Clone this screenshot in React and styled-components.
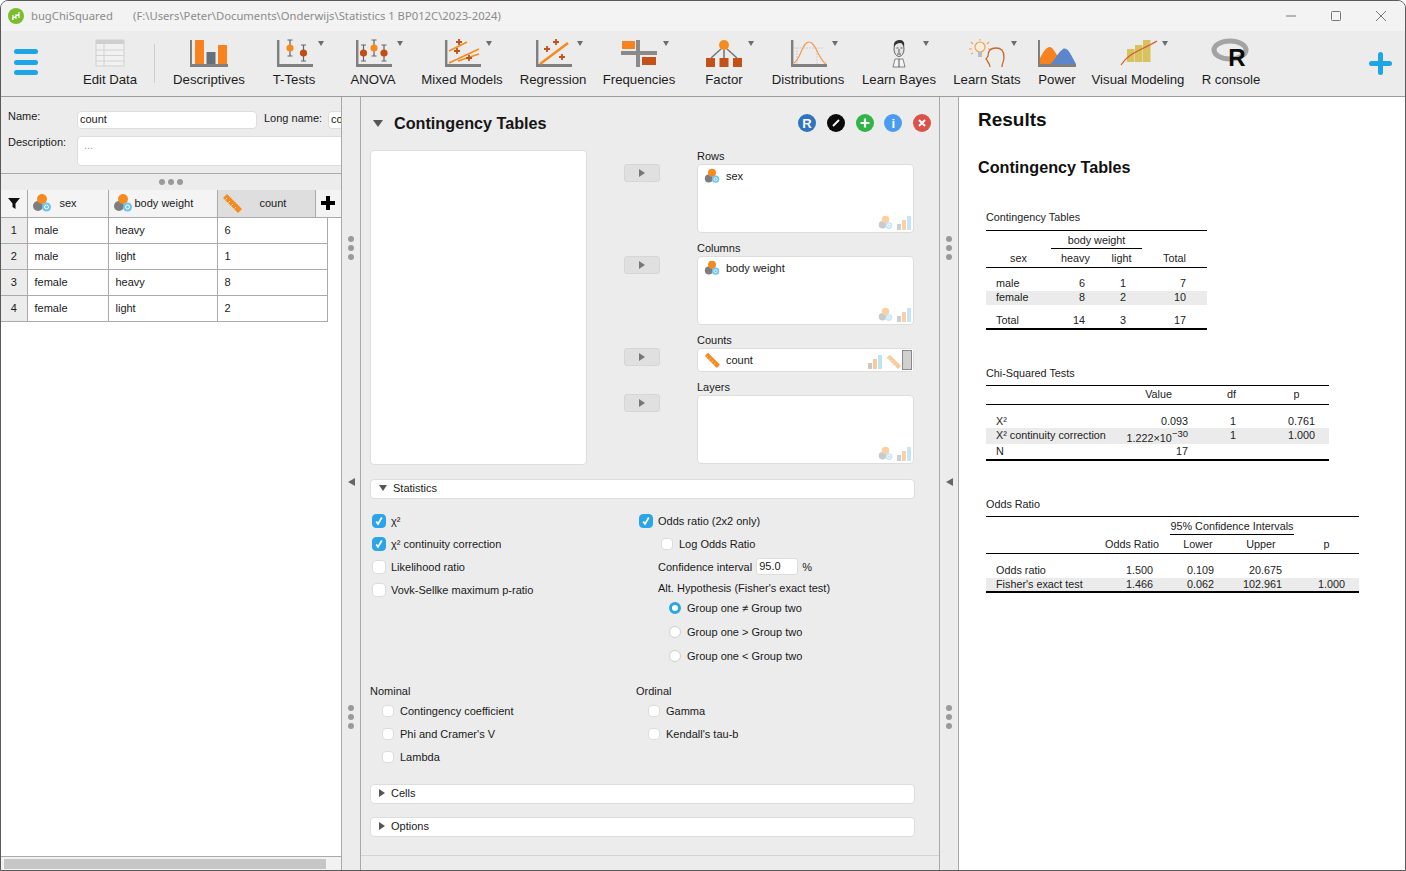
import React from 'react';
import styled, { createGlobalStyle } from 'styled-components';

const Global = createGlobalStyle`
  html, body { margin: 0; padding: 0; background: #fff; }
  body { font-family: "Liberation Sans", Arial, sans-serif; color: #1a1a1a; overflow: hidden; }
  * { box-sizing: border-box; }
`;

const Window = styled.div`
  width: 1406px;
  height: 871px;
  border: 1px solid #5a5a5a;
  border-radius: 8px 8px 0 0;
  overflow: hidden;
  display: flex;
  flex-direction: column;
  background: #ececec;
`;

/* title bar */
const TitleBar = styled.div`
  height: 30px;
  flex: none;
  background: #f3f3f3;
  display: flex;
  align-items: center;
  padding: 0 0 1px 7px;
  font-family: "Noto Sans", sans-serif;
  font-size: 11.25px;
  color: #8b8b8b;
`;
const AppName = styled.span`
  margin-left: 7px;
  width: 102px;
`;
const WinButtons = styled.div`
  margin-left: auto;
  padding-right: 2px;
  display: flex;
`;
const WinButton = styled.div`
  width: 45px;
  height: 29px;
  display: flex;
  align-items: center;
  justify-content: center;
`;

/* toolbar */
const Toolbar = styled.div`
  height: 66px;
  flex: none;
  background: #ececec;
  border-bottom: 1px solid #9c9c9c;
  display: flex;
`;
const Hamburger = styled.div`
  width: 69px;
  padding: 18px 0 0 13px;
  display: flex;
  flex-direction: column;
  gap: 5.5px;
  span {
    display: block;
    width: 24px;
    height: 5px;
    border-radius: 3px;
    background: #1ea5e8;
  }
`;
const ToolItem = styled.div`
  position: relative;
  width: ${(p) => p.$w}px;
  flex: none;
  display: flex;
  flex-direction: column;
  align-items: center;
  padding-top: 8px;
  color: #1c1c1c;
  font-size: 13.2px;
  line-height: 16px;
  white-space: nowrap;
  svg { display: block; margin-bottom: 3px; overflow: visible; }
`;
const DropArrow = styled.i`
  position: absolute;
  top: 10px;
  left: calc(50% + 24px);
  width: 0;
  height: 0;
  border-left: 3.5px solid transparent;
  border-right: 3.5px solid transparent;
  border-top: 5px solid #666e75;
`;
const ToolSep = styled.div`
  width: 1px;
  height: 39px;
  margin: 13px 5px 0 4px;
  background: #cfcfcf;
  flex: none;
`;
const PlusButton = styled.div`
  position: relative;
  margin-left: auto;
  margin-right: 13px;
  margin-top: 21px;
  width: 23px;
  height: 23px;
  &::before, &::after {
    content: '';
    position: absolute;
    background: #1ea5e8;
    border-radius: 3px;
  }
  &::before { left: 0; right: 0; top: 9px; height: 5px; }
  &::after { top: 0; bottom: 0; left: 9px; width: 5px; }
`;

/* panels */
const Main = styled.div`
  flex: 1;
  display: flex;
  min-height: 0;
`;
const DataPanel = styled.div`
  width: 340px;
  flex: none;
  display: flex;
  flex-direction: column;
  background: #fff;
  overflow: hidden;
`;
const VarEditor = styled.div`
  height: 77px;
  flex: none;
  background: #ececec;
  border-bottom: 1px solid #aaa;
  font-size: 11px;
  padding: 13px 0 0 7px;
`;
const EditorRow = styled.div`
  display: flex;
  height: 26px;
  white-space: nowrap;
`;
const EditorLabel = styled.div`
  width: 69px;
  flex: none;
`;
const LongLabel = styled.div`
  width: 64px;
  margin: 2px 0 0 7px;
  flex: none;
`;
const TextField = styled.div`
  width: ${(p) => p.$w}px;
  height: ${(p) => p.$h}px;
  flex: none;
  background: #fff;
  border: 1px solid #ddd;
  border-radius: 4px;
  padding: ${(p) => p.$pad || '1px 2px'};
  color: ${(p) => (p.$muted ? '#999' : '#1a1a1a')};
  overflow: hidden;
  margin-top: ${(p) => p.$mt ?? 1}px;
`;
const Grip = styled.div`
  height: 16px;
  flex: none;
  background: #ececec;
  display: flex;
  justify-content: center;
  align-items: center;
  gap: 3px;
  padding-right: 1px;
`;
const Dot = styled.i`
  width: 6px;
  height: 6px;
  border-radius: 50%;
  background: #9a9a9a;
  display: block;
`;
const DataTable = styled.table`
  border-collapse: collapse;
  table-layout: fixed;
  width: 340px;
  font-size: 11px;
`;
const HeadCell = styled.th`
  height: 27px;
  padding: 0;
  font-weight: normal;
  background: ${(p) => (p.$active ? '#dedede' : '#f4f4f4')};
  border-right: 1px solid #aaa;
  border-bottom: 1px solid #aaa;
  &:last-child { background: #f4f4f4; border-right: 0; }
  > svg { display: block; margin: auto; }
`;
const HeadInner = styled.div`
  display: flex;
  align-items: center;
  padding-left: ${(p) => p.$pl}px;
  span { margin-left: ${(p) => p.$gap}px; }
`;
const RowNum = styled.td`
  height: 26px;
  text-align: center;
  background: #ececec;
  border-right: 1px solid #aaa;
  border-bottom: 1px solid #aaa;
  padding: 0 0 1px;
`;
const DataCell = styled.td`
  padding: 0 0 1px 7px;
  border-right: 1px solid #aaa;
  border-bottom: 1px solid #aaa;
`;
const DataFill = styled.div`
  flex: 1;
  background: #fff;
`;
const ScrollBar = styled.div`
  height: 14px;
  flex: none;
  background: #f2f2f2;
  border-top: 1px solid #aaa;
  padding: 2px 0 0 3px;
  div {
    width: 322px;
    height: 10px;
    background: #c6c6c6;
  }
`;

const Splitter = styled.div`
  width: ${(p) => p.$w}px;
  flex: none;
  background: #ececec;
  border-left: 1px solid #a8a8a8;
  border-right: 1px solid #a8a8a8;
  display: flex;
  flex-direction: column;
  align-items: center;
  padding-top: 139px;
`;
const GripV = styled.div`
  display: flex;
  flex-direction: column;
  gap: 3px;
`;
const SplitArrow = styled.i`
  margin: 218px 0 219px;
  width: 0;
  height: 0;
  border-top: 4px solid transparent;
  border-bottom: 4px solid transparent;
  border-right: 7px solid #666;
`;

/* analysis form */
const Analysis = styled.div`
  width: 578px;
  flex: none;
  background: #ececec;
  font-size: 11px;
  display: flex;
  flex-direction: column;
`;
const FormBody = styled.div`
  padding: 0 9px;
`;
const FormHeader = styled.div`
  height: 53px;
  display: flex;
  align-items: center;
  padding: 0 0 1px 3px;
`;
const HeaderTitle = styled.div`
  font-size: 16.2px;
  font-weight: bold;
  margin-left: 11px;
  color: #161616;
`;
const HeaderButtons = styled.div`
  margin-left: auto;
  margin-right: -1px;
  display: flex;
  gap: 10.75px;
`;
const RoundButton = styled.div`
  width: 18px;
  height: 18px;
  border-radius: 50%;
  background: ${(p) => p.$bg};
  color: #fff;
  font-size: 13px;
  font-weight: bold;
  display: flex;
  align-items: center;
  justify-content: center;
`;
const Triangle = styled.i`
  display: block;
  width: 0;
  height: 0;
  flex: none;
  ${(p) => (p.$open
    ? `border-left: ${p.$s}px solid transparent; border-right: ${p.$s}px solid transparent; border-top: ${p.$s * 1.5}px solid ${p.$c || '#555'};`
    : `border-top: ${p.$s}px solid transparent; border-bottom: ${p.$s}px solid transparent; border-left: ${p.$s * 1.5}px solid ${p.$c || '#555'};`)}
`;
const VarArea = styled.div`
  display: grid;
  grid-template-columns: 217px 1fr;
  height: 315px;
`;
const AvailableBox = styled.div`
  background: #fff;
  border: 1px solid #ddd;
  border-radius: 4px;
`;
const AssignColumn = styled.div`
  display: flex;
  flex-direction: column;
`;
const AssignRow = styled.div`
  display: flex;
  align-items: flex-start;
  margin-bottom: ${(p) => p.$mb}px;
`;
const ArrowButton = styled.div`
  width: 36px;
  height: 18px;
  margin: ${(p) => p.$mt || 14}px 37px 0 37px;
  background: #e0e0e0;
  border: 1px solid #d6d6d6;
  border-radius: 3px;
  display: flex;
  align-items: center;
  justify-content: center;
`;
const Field = styled.div`
  width: 217px;
  flex: none;
`;
const FieldLabel = styled.div`
  height: 14px;
  line-height: 13px;
`;
const FieldBox = styled.div`
  position: relative;
  height: ${(p) => p.$h}px;
  background: #fff;
  border: 1px solid #ddd;
  border-radius: 4px;
  display: flex;
  align-items: flex-start;
  padding: 3px 0 0 6px;
  span { margin-left: 6px; line-height: 16px; }
`;
const FieldHints = styled.div`
  position: absolute;
  right: ${(p) => p.$r || 2}px;
  bottom: 2px;
  display: flex;
  align-items: flex-end;
  gap: 4px;
  opacity: ${(p) => p.$o || 0.4};
`;
const SelectedChip = styled.div`
  position: absolute;
  right: 1px;
  top: 1px;
  width: 10px;
  height: 20px;
  background: #d0d0d0;
  border: 1px solid #888;
  outline: 1px solid #fff;
`;
const Section = styled.div`
  height: 20px;
  margin-top: ${(p) => p.$mt}px;
  background: #fff;
  border: 1px solid #ddd;
  border-radius: 4px;
  width: 545px;
  display: flex;
  align-items: center;
  padding: 0 0 2px 8px;
  gap: 6px;
`;
const OptionsGrid = styled.div`
  display: grid;
  grid-template-columns: 267px 1fr;
  margin-top: 10px;
  padding-left: 2px;
`;
const OptionRow = styled.div`
  display: flex;
  align-items: center;
  height: ${(p) => p.$h || 23}px;
  padding-left: ${(p) => p.$pl || 0}px;
  white-space: nowrap;
`;
const CheckBox = styled.div`
  width: ${(p) => p.$s || 14}px;
  height: ${(p) => p.$s || 14}px;
  flex: none;
  margin-right: ${(p) => (p.$s ? 6 : 5)}px;
  border-radius: 4px;
  background: ${(p) => (p.$on ? '#2ca5e8' : '#fff')};
  border: 1px solid ${(p) => (p.$on ? '#2ca5e8' : '#dcdcdc')};
  display: flex;
  align-items: center;
  justify-content: center;
`;
const Radio = styled.div`
  width: 12px;
  height: 12px;
  flex: none;
  margin-right: 6px;
  border-radius: 50%;
  background: #fff;
  border: ${(p) => (p.$on ? '3px solid #2ca5e8' : '1px solid #cfcfcf')};
`;
const SmallInput = styled.div`
  width: 42px;
  height: 17px;
  background: #fff;
  border: 1px solid #ddd;
  border-radius: 3px;
  margin: 0 4px;
  padding: 1px 2px;
`;
const GroupGrid = styled.div`
  display: grid;
  grid-template-columns: 266px 1fr;
  margin-top: 18px;
`;
const GroupLabel = styled.div`
  height: 14px;
  line-height: 14px;
`;
const GroupRows = styled.div`
  padding: 1px 0 0 12px;
`;
const FormFooter = styled.div`
  margin-top: 18px;
  border-top: 1px solid #d4d4d4;
  flex: 1;
`;

/* results */
const Results = styled.div`
  flex: 1;
  background: #fff;
  padding: 10px 0 0 19px;
  color: #222;
`;
const ResultsTitle = styled.h1`
  margin: 0;
  font-size: 19px;
  line-height: 26px;
  color: #111;
`;
const AnalysisTitle = styled.h2`
  margin: 23px 0 0;
  font-size: 16.2px;
  line-height: 22px;
  color: #111;
`;
const TableTitle = styled.div`
  margin: ${(p) => p.$mt}px 0 0 8px;
  font-size: 10.8px;
  height: 14px;
  line-height: 14px;
`;
const ResultTable = styled.table`
  border-collapse: collapse;
  table-layout: fixed;
  width: ${(p) => p.$w}px;
  margin: ${(p) => p.$mt}px 0 0 8px;
  font-size: 10.8px;
  border-top: 1px solid #000;
  border-bottom: 2.5px solid #000;
`;
const Tr = styled.tr`
  height: ${(p) => p.$h || 14}px;
  background: ${(p) => (p.$band ? '#ebebeb' : 'transparent')};
  border-bottom: ${(p) => (p.$line ? '1px solid #000' : '0')};
`;
const Td = styled.td`
  padding: 0 ${(p) => p.$pr || 0}px ${(p) => p.$pb || 0}px ${(p) => p.$pl || 0}px;
  text-align: ${(p) => p.$a || 'right'};
  vertical-align: ${(p) => p.$v || 'middle'};
  white-space: nowrap;
  font-weight: normal;
  line-height: 13px;
  position: relative;
`;
const SpanHead = styled.div`
  border-bottom: 1px solid #000;
  text-align: center;
  height: 18px;
  line-height: 18px;
`;
const Sci = styled.span`
  position: relative;
  top: 2px;
  sup { font-size: 9.5px; line-height: 0; vertical-align: 5px; }
`;

/* icons */
const Ic = ({ children }) => <svg width="40" height="30" viewBox="0 0 40 30">{children}</svg>;
const Axis = () => <path d="M3 1h2.4v24H39v3H3z" fill="#7f7f7f" />;
const Whisker = ({ x, y, c }) => (
  <g>
    <path d={`M${x} ${y - 8}v16M${x - 2.5} ${y - 8}h5M${x - 2.5} ${y + 8}h5`} stroke="#666" strokeWidth="1.2" fill="none" />
    <circle cx={x} cy={y} r="3.6" fill={c} />
  </g>
);
const Plus = ({ x, y, c = '#c2521a' }) => <path d={`M${x - 3} ${y}h6M${x} ${y - 3}v6`} stroke={c} strokeWidth="1.8" />;

const EditDataIcon = () => (
  <Ic>
    <rect x="6" y="1" width="28" height="26" fill="#f1f1f1" stroke="#d0d0d0" />
    <rect x="6" y="1" width="28" height="4" fill="#cfcfcf" />
    <path d="M6 11h28M6 16.5h28M6 22h28M14 5v22" stroke="#d2d2d2" />
  </Ic>
);
const DescriptivesIcon = () => (
  <Ic>
    <path d="M1 1h2v24h36v3H1z" fill="#7f7f7f" />
    <rect x="6" y="1" width="9" height="24" fill="#f7821e" />
    <rect x="17.5" y="13" width="9" height="12" fill="#65707a" />
    <rect x="29" y="6" width="9" height="19" fill="#f7821e" />
  </Ic>
);
const TTestIcon = () => (
  <Ic>
    <Axis />
    <Whisker x={16} y={9} c="#f58b1f" />
    <Whisker x={29.5} y={14} c="#bf4f14" />
  </Ic>
);
const AnovaIcon = () => (
  <Ic>
    <Axis />
    <Whisker x={10.5} y={14} c="#bf4f14" />
    <Whisker x={21} y={9} c="#f58b1f" />
    <Whisker x={31} y={14} c="#bf4f14" />
  </Ic>
);
const MixedIcon = () => (
  <Ic>
    <Axis />
    <path d="M7 12L25 3M7 24L37 10M16 22L37 15" stroke="#f58b1f" strokeWidth="1.6" />
    <Plus x={17} y={3} />
    <Plus x={15} y={12} />
    <Plus x={27} y={19} />
  </Ic>
);
const RegressionIcon = () => (
  <Ic>
    <Axis />
    <path d="M7 25L35 4" stroke="#f58b1f" strokeWidth="2.6" />
    <Plus x={14} y={10} />
    <Plus x={23} y={3} />
    <Plus x={29} y={18} />
  </Ic>
);
const FrequenciesIcon = () => (
  <Ic>
    <rect x="2" y="12" width="36" height="4" fill="#8a8a8a" />
    <rect x="17" y="1" width="4" height="27" fill="#8a8a8a" />
    <rect x="3" y="2" width="13" height="8" fill="#f7821e" />
    <rect x="23" y="18" width="14" height="8" fill="#c2521a" />
  </Ic>
);
const FactorIcon = () => (
  <Ic>
    <circle cx="20" cy="6" r="5" fill="#f58b1f" />
    <path d="M20 11v8M17 10L7 19M23 10L33 19" stroke="#777" strokeWidth="1.6" />
    <rect x="2" y="19" width="9" height="9" fill="#c2521a" />
    <rect x="15.5" y="19" width="9" height="9" fill="#c2521a" />
    <rect x="29" y="19" width="9" height="9" fill="#c2521a" />
  </Ic>
);
const DistributionIcon = () => (
  <Ic>
    <Axis />
    <path d="M9 25V9M29 25V9M6 9h30" stroke="#cfcfcf" strokeWidth="1" strokeDasharray="2 1" fill="none" />
    <path d="M6 24C13 20 14 3 21 3S30 20 38 25" stroke="#f29a50" strokeWidth="1.2" fill="none" />
  </Ic>
);
const BayesIcon = () => (
  <Ic>
    <path d="M14 28l2-8h8l2 8z" fill="#f4f4f4" stroke="#555" strokeWidth=".7" />
    <ellipse cx="20" cy="10" rx="5" ry="7.5" fill="#e5e5e5" stroke="#444" strokeWidth=".8" />
    <path d="M15 8C14 2 18 1 21 1s5 2 4 7c-1-3-2-4-4-4s-5 1-6 4z" fill="#333" />
    <path d="M17.5 9h2M21.5 9h2M20 10v4M18 15h4M20 20v8" stroke="#333" strokeWidth=".8" fill="none" />
  </Ic>
);
const StatsIcon = () => (
  <Ic>
    <circle cx="13" cy="8" r="5" fill="#f7eddc" stroke="#f0a050" strokeWidth="1.2" />
    <rect x="11" y="13" width="4" height="5" fill="#bbb" />
    <path d="M13 0v1.500M4 3l2 2M22 3l-2 2M2 10h3M21 10h3M4 15l2-1" stroke="#f0a050" strokeWidth="1.2" />
    <path d="M23 28c0-4-3-5-3-7l-1-1 2-3c0-6 3-8 8-8s8 3 8 9c0 5-2 6-2 10" stroke="#c8682a" strokeWidth="1.3" fill="none" />
  </Ic>
);
const PowerIcon = () => (
  <Ic>
    <path d="M1 1h2v24h36v3H1z" fill="#7f7f7f" />
    <path d="M3 25V19C8 9 12 6 15 9s6 10 12 16z" fill="#f7821e" />
    <path d="M13 25C17 23 21 13 26 10s9 8 13 15z" fill="#5b86cc" />
  </Ic>
);
const VisualIcon = () => (
  <Ic>
    <rect x="9" y="10" width="7.5" height="13" fill="#d8c25e" />
    <rect x="17" y="6" width="7.5" height="17" fill="#d8c25e" />
    <rect x="25" y="1" width="7.5" height="22" fill="#d8c25e" />
    <path d="M3 26C10 14 22 12 39 2" stroke="#d9572a" strokeWidth="1.2" fill="none" />
  </Ic>
);
const RIcon = () => (
  <Ic>
    <ellipse cx="19" cy="11" rx="16" ry="9" fill="none" stroke="#a3a3a3" strokeWidth="5" />
    <text x="26" y="27" textAnchor="middle" fontFamily="Liberation Sans" fontWeight="bold" fontSize="24" fill="#0a0a0a">R</text>
  </Ic>
);

const Nominal = ({ s = 20 }) => (
  <svg width={s} height={s} viewBox="0 0 20 20">
    <circle cx="6" cy="13" r="5" fill="#7d7d7d" />
    <circle cx="10" cy="6" r="5" fill="#f58b1f" />
    <circle cx="14.5" cy="14" r="4.5" fill="#6cc4ee" />
    <circle cx="14.5" cy="14" r="2" fill="none" stroke="#fff" strokeWidth="1" />
  </svg>
);
const Ruler = ({ s = 20, c = '#f58b1f' }) => (
  <svg width={s} height={s} viewBox="0 0 20 20">
    <path d="M1 5L5 1l15 15-4 4z" fill={c} />
    <path d="M5 5l-1.5 1.500M8 8l-1.500 1.500M11 11l-1.500 1.500M14 14l-1.500 1.500" stroke="#fff" strokeWidth=".8" />
  </svg>
);
const Bars = () => (
  <svg width="14" height="14" viewBox="0 0 14 14">
    <rect x="0" y="8" width="4" height="6" fill="#888" />
    <rect x="5" y="4" width="4" height="10" fill="#f58b1f" />
    <rect x="10" y="0" width="4" height="14" fill="#6cc4ee" />
  </svg>
);
const Hints = () => (
  <FieldHints>
    <Nominal s={15} />
    <Bars />
  </FieldHints>
);
const Check = () => (
  <svg width="10" height="10" viewBox="0 0 10 10">
    <path d="M2.2 5.500L4 8l3.800-6.500" stroke="#fff" strokeWidth="1.7" fill="none" />
  </svg>
);
const Opt = ({ on, s, children, pl, h }) => (
  <OptionRow $pl={pl} $h={h}>
    <CheckBox $on={on} $s={s}>{on && <Check />}</CheckBox>
    {children}
  </OptionRow>
);
const Rad = ({ on, children, h }) => (
  <OptionRow $pl={30} $h={h}>
    <Radio $on={on} />
    {children}
  </OptionRow>
);

const tools = [
  { label: 'Descriptives', w: 98, icon: <DescriptivesIcon /> },
  { label: 'T-Tests', w: 72, icon: <TTestIcon />, drop: true },
  { label: 'ANOVA', w: 86, icon: <AnovaIcon />, drop: true },
  { label: 'Mixed Models', w: 92, icon: <MixedIcon />, drop: true },
  { label: 'Regression', w: 90, icon: <RegressionIcon />, drop: true },
  { label: 'Frequencies', w: 82, icon: <FrequenciesIcon />, drop: true },
  { label: 'Factor', w: 88, icon: <FactorIcon />, drop: true },
  { label: 'Distributions', w: 80, icon: <DistributionIcon />, drop: true },
  { label: 'Learn Bayes', w: 102, icon: <BayesIcon />, drop: true },
  { label: 'Learn Stats', w: 74, icon: <StatsIcon />, drop: true },
  { label: 'Power', w: 66, icon: <PowerIcon /> },
  { label: 'Visual Modeling', w: 96, icon: <VisualIcon />, drop: true },
  { label: 'R console', w: 90, icon: <RIcon /> },
];

const rows = [
  [1, 'male', 'heavy', 6],
  [2, 'male', 'light', 1],
  [3, 'female', 'heavy', 8],
  [4, 'female', 'light', 2],
];

const GripDots = () => (
  <GripV>
    <Dot />
    <Dot />
    <Dot />
  </GripV>
);

const SplitterColumn = ({ w }) => (
  <Splitter $w={w}>
    <GripDots />
    <SplitArrow />
    <GripDots />
  </Splitter>
);

export default function App() {
  return (
    <Window>
      <Global />
      <TitleBar>
        <svg width="16" height="16" viewBox="0 0 16 16">
          <circle cx="8" cy="8" r="8" fill="#7dbb2f" />
          <path d="M4 11l7-5M5 7v5M8 6v5M11 4v6" stroke="#fff" strokeWidth="1.2" fill="none" />
        </svg>
        <AppName>bugChiSquared</AppName>
        <span>(F:\Users\Peter\Documents\Onderwijs\Statistics 1 BP012C\2023-2024)</span>
        <WinButtons>
          <WinButton>
            <svg width="12" height="12" viewBox="0 0 12 12"><path d="M1 6h10" stroke="#777" /></svg>
          </WinButton>
          <WinButton>
            <svg width="12" height="12" viewBox="0 0 12 12"><rect x="1.5" y="1.5" width="9" height="9" rx="1" fill="none" stroke="#777" /></svg>
          </WinButton>
          <WinButton>
            <svg width="12" height="12" viewBox="0 0 12 12"><path d="M1 1l10 10M11 1L1 11" stroke="#777" /></svg>
          </WinButton>
        </WinButtons>
      </TitleBar>

      <Toolbar>
        <Hamburger><span /><span /><span /></Hamburger>
        <ToolItem $w={80}><EditDataIcon />Edit Data</ToolItem>
        <ToolSep />
        {tools.map((t) => (
          <ToolItem key={t.label} $w={t.w}>
            {t.icon}
            {t.label}
            {t.drop && <DropArrow />}
          </ToolItem>
        ))}
        <PlusButton />
      </Toolbar>

      <Main>
        <DataPanel>
          <VarEditor>
            <EditorRow>
              <EditorLabel>Name:</EditorLabel>
              <TextField $w={180} $h={18}>count</TextField>
              <LongLabel>Long name:</LongLabel>
              <TextField $w={20} $h={18}>count</TextField>
            </EditorRow>
            <EditorRow>
              <EditorLabel>Description:</EditorLabel>
              <TextField $w={270} $h={30} $muted $pad="2px 6px" $mt={0}>...</TextField>
            </EditorRow>
          </VarEditor>
          <Grip><Dot /><Dot /><Dot /></Grip>
          <DataTable>
            <colgroup>
              <col width="26" />
              <col width="81" />
              <col width="109" />
              <col width="98" />
              <col width="12" />
              <col width="14" />
            </colgroup>
            <thead>
              <tr>
                <HeadCell>
                  <svg width="14" height="14" viewBox="0 0 14 14">
                    <path d="M1 2h12L8.5 7.500V13l-3-2V7.500z" fill="#111" />
                  </svg>
                </HeadCell>
                <HeadCell>
                  <HeadInner $pl={4} $gap={8}><Nominal /><span>sex</span></HeadInner>
                </HeadCell>
                <HeadCell>
                  <HeadInner $pl={4} $gap={2}><Nominal /><span>body weight</span></HeadInner>
                </HeadCell>
                <HeadCell $active>
                  <HeadInner $pl={4} $gap={18}><Ruler /><span>count</span></HeadInner>
                </HeadCell>
                <HeadCell colSpan={2}>
                  <svg width="16" height="16" viewBox="0 0 16 16">
                    <path d="M6 1h4v5h5v4h-5v5H6v-5H1V6h5z" fill="#000" />
                  </svg>
                </HeadCell>
              </tr>
            </thead>
            <tbody>
              {rows.map((r) => (
                <tr key={r[0]}>
                  <RowNum>{r[0]}</RowNum>
                  <DataCell>{r[1]}</DataCell>
                  <DataCell>{r[2]}</DataCell>
                  <DataCell colSpan={2}>{r[3]}</DataCell>
                  <td />
                </tr>
              ))}
            </tbody>
          </DataTable>
          <DataFill />
          <ScrollBar><div /></ScrollBar>
        </DataPanel>

        <SplitterColumn w={20} />

        <Analysis>
          <FormBody>
            <FormHeader>
              <Triangle $open $s={5} />
              <HeaderTitle>Contingency Tables</HeaderTitle>
              <HeaderButtons>
                <RoundButton $bg="#2f74c0">R</RoundButton>
                <RoundButton $bg="#0a0a0a">
                  <svg width="10" height="10" viewBox="0 0 10 10"><path d="M2 8L8 2" stroke="#fff" strokeWidth="1.8" /></svg>
                </RoundButton>
                <RoundButton $bg="#2fb44a">
                  <svg width="12" height="12" viewBox="0 0 12 12"><path d="M6 1.500v9M1.500 6h9" stroke="#fff" strokeWidth="2.2" /></svg>
                </RoundButton>
                <RoundButton $bg="#4b9cf0">i</RoundButton>
                <RoundButton $bg="#d9534a">
                  <svg width="10" height="10" viewBox="0 0 10 10"><path d="M2 2l6 6M8 2L2 8" stroke="#fff" strokeWidth="2" /></svg>
                </RoundButton>
              </HeaderButtons>
            </FormHeader>

            <VarArea>
              <AvailableBox />
              <AssignColumn>
                <AssignRow $mb={9}>
                  <ArrowButton><Triangle $s={4} $c="#777" /></ArrowButton>
                  <Field>
                    <FieldLabel>Rows</FieldLabel>
                    <FieldBox $h={69}><Nominal s={16} /><span>sex</span><Hints /></FieldBox>
                  </Field>
                </AssignRow>
                <AssignRow $mb={9}>
                  <ArrowButton><Triangle $s={4} $c="#777" /></ArrowButton>
                  <Field>
                    <FieldLabel>Columns</FieldLabel>
                    <FieldBox $h={69}><Nominal s={16} /><span>body weight</span><Hints /></FieldBox>
                  </Field>
                </AssignRow>
                <AssignRow $mb={9}>
                  <ArrowButton><Triangle $s={4} $c="#777" /></ArrowButton>
                  <Field>
                    <FieldLabel>Counts</FieldLabel>
                    <FieldBox $h={24}>
                      <Ruler s={16} />
                      <span>count</span>
                      <FieldHints $r={12} $o={0.45}>
                        <Bars />
                        <Ruler s={15} />
                      </FieldHints>
                      <SelectedChip />
                    </FieldBox>
                  </Field>
                </AssignRow>
                <AssignRow $mb={0}>
                  <ArrowButton $mt={13}><Triangle $s={4} $c="#777" /></ArrowButton>
                  <Field>
                    <FieldLabel>Layers</FieldLabel>
                    <FieldBox $h={69}><Hints /></FieldBox>
                  </Field>
                </AssignRow>
              </AssignColumn>
            </VarArea>

            <Section $mt={14}><Triangle $open $s={4} />Statistics</Section>

            <OptionsGrid>
              <div>
                <Opt on>χ²</Opt>
                <Opt on>χ² continuity correction</Opt>
                <Opt>Likelihood ratio</Opt>
                <Opt>Vovk-Sellke maximum p-ratio</Opt>
              </div>
              <div>
                <Opt on>Odds ratio (2x2 only)</Opt>
                <Opt s={12} pl={22}>Log Odds Ratio</Opt>
                <OptionRow $pl={19}>Confidence interval<SmallInput>95.0</SmallInput>%</OptionRow>
                <OptionRow $pl={19} $h={20}>Alt. Hypothesis (Fisher's exact test)</OptionRow>
                <Rad on h={20}>Group one ≠ Group two</Rad>
                <Rad h={27}>Group one &gt; Group two</Rad>
                <Rad h={21}>Group one &lt; Group two</Rad>
              </div>
            </OptionsGrid>

            <GroupGrid>
              <div>
                <GroupLabel>Nominal</GroupLabel>
                <GroupRows>
                  <Opt s={12}>Contingency coefficient</Opt>
                  <Opt s={12}>Phi and Cramer's V</Opt>
                  <Opt s={12}>Lambda</Opt>
                </GroupRows>
              </div>
              <div>
                <GroupLabel>Ordinal</GroupLabel>
                <GroupRows>
                  <Opt s={12}>Gamma</Opt>
                  <Opt s={12}>Kendall's tau-b</Opt>
                </GroupRows>
              </div>
            </GroupGrid>

            <Section $mt={16}><Triangle $s={4} />Cells</Section>
            <Section $mt={13}><Triangle $s={4} />Options</Section>
          </FormBody>
          <FormFooter />
        </Analysis>

        <SplitterColumn w={20} />

        <Results>
          <ResultsTitle>Results</ResultsTitle>
          <AnalysisTitle>Contingency Tables</AnalysisTitle>

          <TableTitle $mt={32}>Contingency Tables</TableTitle>
          <ResultTable $w={221} $mt={6}>
            <colgroup>
              <col width="65" />
              <col width="47" />
              <col width="44" />
              <col width="65" />
            </colgroup>
            <tbody>
              <Tr $h={19}>
                <Td />
                <Td colSpan={2} $a="center" $v="top"><SpanHead>body weight</SpanHead></Td>
                <Td />
              </Tr>
              <Tr $h={18} $line>
                <Td $a="center">sex</Td>
                <Td $a="center" $pl={2}>heavy</Td>
                <Td $a="center" $pl={3}>light</Td>
                <Td $a="center">Total</Td>
              </Tr>
              <Tr $h={9} />
              <Tr><Td $a="left" $pl={10}>male</Td><Td $pr={13}>6</Td><Td $pr={16}>1</Td><Td $pr={21}>7</Td></Tr>
              <Tr $band><Td $a="left" $pl={10}>female</Td><Td $pr={13}>8</Td><Td $pr={16}>2</Td><Td $pr={21}>10</Td></Tr>
              <Tr $h={9} />
              <Tr $h={15}><Td $a="left" $pl={10}>Total</Td><Td $pr={13}>14</Td><Td $pr={16}>3</Td><Td $pr={21}>17</Td></Tr>
            </tbody>
          </ResultTable>

          <TableTitle $mt={36}>Chi-Squared Tests</TableTitle>
          <ResultTable $w={343} $mt={5}>
            <colgroup>
              <col width="132" />
              <col width="82" />
              <col width="65" />
              <col width="64" />
            </colgroup>
            <tbody>
              <Tr $h={19} $line>
                <Td />
                <Td $pr={28}>Value</Td>
                <Td $a="center" $pr={2}>df</Td>
                <Td $a="center" $pr={1}>p</Td>
              </Tr>
              <Tr $h={10} />
              <Tr><Td $a="left" $pl={10}>X²</Td><Td $pr={12}>0.093</Td><Td $pr={29}>1</Td><Td $pr={14}>0.761</Td></Tr>
              <Tr $h={16} $band>
                <Td $a="left" $pl={10} $pb={2}>X² continuity correction</Td>
                <Td $pr={12}><Sci>1.222×10<sup>−30</sup></Sci></Td>
                <Td $pr={29} $pb={2}>1</Td>
                <Td $pr={14} $pb={2}>1.000</Td>
              </Tr>
              <Tr $h={16}><Td $a="left" $pl={10}>N</Td><Td $pr={12}>17</Td><Td /><Td /></Tr>
            </tbody>
          </ResultTable>

          <TableTitle $mt={36}>Odds Ratio</TableTitle>
          <ResultTable $w={373} $mt={5}>
            <colgroup>
              <col width="114" />
              <col width="70" />
              <col width="62" />
              <col width="62" />
              <col width="65" />
            </colgroup>
            <tbody>
              <Tr $h={19}>
                <Td />
                <Td />
                <Td colSpan={2} $a="center" $v="top"><SpanHead>95% Confidence Intervals</SpanHead></Td>
                <Td />
              </Tr>
              <Tr $h={18} $line>
                <Td />
                <Td $pr={11}>Odds Ratio</Td>
                <Td $a="center" $pr={6}>Lower</Td>
                <Td $a="center" $pr={4}>Upper</Td>
                <Td $a="center">p</Td>
              </Tr>
              <Tr $h={10} />
              <Tr><Td $a="left" $pl={10}>Odds ratio</Td><Td $pr={17}>1.500</Td><Td $pr={18}>0.109</Td><Td $pr={12}>20.675</Td><Td /></Tr>
              <Tr $band><Td $a="left" $pl={10}>Fisher's exact test</Td><Td $pr={17}>1.466</Td><Td $pr={18}>0.062</Td><Td $pr={12}>102.961</Td><Td $pr={14}>1.000</Td></Tr>
            </tbody>
          </ResultTable>
        </Results>
      </Main>
    </Window>
  );
}
